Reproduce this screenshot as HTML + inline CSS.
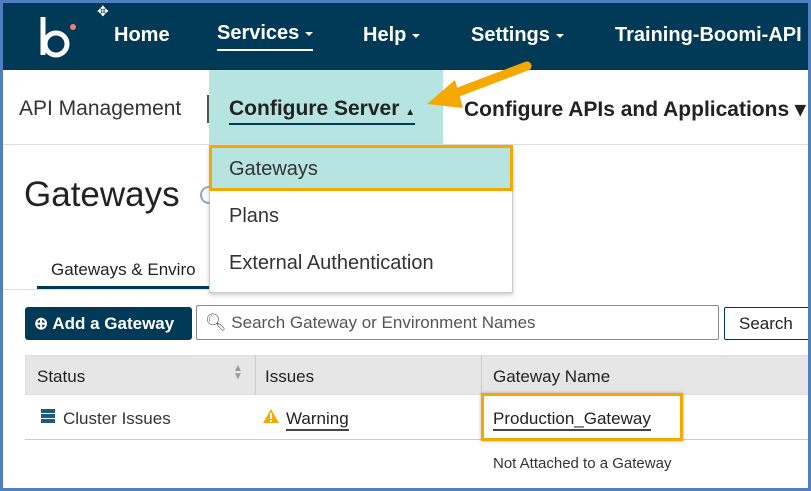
<!DOCTYPE html><html><head><style>
*{margin:0;padding:0;box-sizing:border-box}
body{width:811px;height:491px;overflow:hidden;background:#4f7fc0;font-family:"Liberation Sans",sans-serif;position:relative}
.p{position:absolute;left:3px;top:3px;width:805px;height:485px;background:#fff;overflow:hidden}
.a{position:absolute;white-space:nowrap}
.nav{position:absolute;left:0;top:0;width:805px;height:67px;background:#003a57}
.nt{color:#fff;font-weight:bold;font-size:20px;top:21px}
.car{display:inline-block;border-left:4px solid transparent;border-right:4px solid transparent;border-top:4px solid #fff;vertical-align:middle;margin-left:6px}
</style></head><body><div class="p">
<div class="nav"></div>
<svg class="a" style="left:34px;top:12px" width="42" height="46"><path d="M6 2 V40" stroke="#fff" stroke-width="5"/><circle cx="19" cy="29" r="11" fill="none" stroke="#fff" stroke-width="5"/><circle cx="36" cy="12" r="3" fill="#f08070"/></svg>
<div class="a nt" style="left:111px">Home</div>
<div class="a nt" style="left:214px;border-bottom:2px solid #fff;padding-bottom:4px;top:19px">Services<span class="car"></span></div>
<div class="a nt" style="left:360px">Help<span class="car"></span></div>
<div class="a nt" style="left:468px">Settings<span class="car"></span></div>
<div class="a nt" style="left:612px">Training-Boomi-API</div>
<div class="a" style="left:206px;top:67px;width:234px;height:75px;background:#b6e4e0"></div>
<div class="a" style="left:0;top:141px;width:805px;height:1px;background:#ddd"></div>
<div class="a" style="left:16px;top:94px;font-size:21px;color:#333">API Management</div>
<div class="a" style="left:204px;top:92px;width:2px;height:28px;background:#555"></div>
<div class="a" style="left:226px;top:94px;font-size:21px;font-weight:bold;color:#222;border-bottom:2px solid #003a57;padding-bottom:2px">Configure Server <span style="font-size:10px">▲</span></div>
<div class="a" style="left:461px;top:94px;font-size:21px;font-weight:bold;color:#222">Configure APIs and Applications ▾</div>
<div class="a" style="left:206px;top:142px;width:304px;height:148px;background:#fff;border:1px solid #ccc;box-shadow:0 2px 4px rgba(0,0,0,.2)"></div>
<div class="a" style="left:206px;top:142px;width:304px;height:46px;background:#b6e4e0;border:3px solid #f5a800"></div>
<div class="a" style="left:226px;top:155px;font-size:20px;color:#333">Gateways</div>
<div class="a" style="left:226px;top:202px;font-size:20px;color:#333">Plans</div>
<div class="a" style="left:226px;top:249px;font-size:20px;color:#333">External Authentication</div>
<div class="a" style="left:21px;top:172px;font-size:35px;color:#222">Gateways</div>
<div class="a" style="left:197px;top:183px;width:10px;height:18px;border:2px solid #8ab;border-right:none;border-radius:9px 0 0 9px"></div>
<div class="a" style="left:48px;top:257px;font-size:17px;color:#222">Gateways &amp; Enviro</div>
<div class="a" style="left:34px;top:283px;width:172px;height:3px;background:#003a57"></div>
<div class="a" style="left:0;top:286px;width:206px;height:1px;background:#ddd"></div>
<div class="a" style="left:22px;top:304px;width:167px;height:33px;background:#003a57;border-radius:3px;color:#fff;font-weight:bold;font-size:17px;padding:7px 0 0 9px">⊕ Add a Gateway</div>
<div class="a" style="left:193px;top:302px;width:523px;height:35px;border:1px solid #888;border-radius:2px;font-size:17px;color:#555;padding:7px 0 0 8px">🔍︎ Search Gateway or Environment Names</div>
<div class="a" style="left:721px;top:304px;width:90px;height:33px;border:1px solid #003a57;border-radius:2px;font-size:17px;color:#222;padding:6px 0 0 14px">Search</div>
<div class="a" style="left:22px;top:352px;width:790px;height:40px;background:#e6e6e6;border:1px solid #ddd"></div>
<div class="a" style="left:252px;top:352px;width:1px;height:40px;background:#ccc"></div>
<div class="a" style="left:478px;top:352px;width:1px;height:40px;background:#ccc"></div>
<div class="a" style="left:34px;top:364px;font-size:17px;color:#222">Status</div>
<div class="a" style="left:230px;top:362px;font-size:10px;color:#999;line-height:8px">▲<br>▼</div>
<div class="a" style="left:262px;top:364px;font-size:17px;color:#222">Issues</div>
<div class="a" style="left:490px;top:364px;font-size:17px;color:#222">Gateway Name</div>
<div class="a" style="left:22px;top:436px;width:790px;height:1px;background:#ccc"></div>
<svg class="a" style="left:38px;top:406px" width="14" height="14"><rect y="0" width="14" height="4" fill="#1e5a80"/><rect y="5" width="14" height="4" fill="#1e5a80"/><rect y="10" width="14" height="4" fill="#1e5a80"/></svg>
<div class="a" style="left:60px;top:406px;font-size:17px;color:#333">Cluster Issues</div>
<svg class="a" style="left:259px;top:405px" width="18" height="16"><path d="M9 1 L17 15 H1 Z" fill="#f5a800"/><rect x="8" y="5" width="2" height="6" fill="#fff"/><rect x="8" y="12" width="2" height="2" fill="#fff"/></svg>
<div class="a" style="left:283px;top:406px;font-size:17px;color:#222;border-bottom:2px solid #444">Warning</div>
<div class="a" style="left:478px;top:390px;width:202px;height:48px;border:3px solid #f5a800;box-shadow:0 0 3px rgba(0,0,0,.3)"></div>
<div class="a" style="left:490px;top:406px;font-size:17px;color:#222;border-bottom:2px solid #444">Production_Gateway</div>
<div class="a" style="left:490px;top:452px;font-size:15px;color:#333">Not Attached to a Gateway</div>
<svg class="a" style="left:400px;top:45px" width="140" height="70"><path d="M124 18 L45 48" stroke="#f5a800" stroke-width="9" stroke-linecap="round"/><path d="M24 56 L52 32 L60 60 Z" fill="#f5a800"/></svg>
<div class="a" style="left:94px;top:0;font-size:14px;color:#fff">✥</div>
</div></body></html>
